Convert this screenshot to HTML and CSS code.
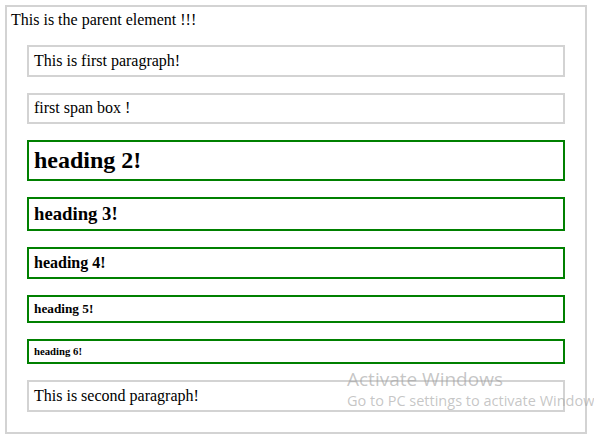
FILE: index.html
```html
<!DOCTYPE html>
<html lang="en">
  <head>
    <meta charset="UTF-8" />
    <meta name="viewport" content="width=device-width, initial-scale=1.0" />
    <title>Parent and children</title>
    <link rel="stylesheet" href="styles.css">
  </head>
  <body>
    <div class="parent">
      This is the parent element !!!
      <p class="box">This is first paragraph!</p>
      <span class="box">first span box !</span>
      <h2 class="box heading">heading 2!</h2>
      <h3 class="box heading">heading 3!</h3>
      <h4 class="box heading">heading 4!</h4>
      <h5 class="box heading">heading 5!</h5>
      <h6 class="box heading">heading 6!</h6>
      <p class="box">This is second paragraph!</p>
    </div>

    <div class="activate">
      <div class="activate-title">Activate Windows</div>
      <div class="activate-sub">Go to PC settings to activate Windows.</div>
    </div>
  </body>
</html>
```

FILE: styles.css
```css
body {
  font-family: "Liberation Serif", "Times New Roman", serif;
  font-size: 16px;
  line-height: 1.15;
  margin: 5px 7px 5px 5px;
  overflow: hidden;
}
.parent {
  border: 2px solid lightgray;
  padding: 4px 4px 4px 4px;
}
.box {
  display: block;
  margin: 16px;
  padding: 4.5px 5px;
  border: 2px solid lightgray;
}
.heading {
  border-color: green;
}
.activate {
  position: absolute;
  left: 347px;
  top: 367px;
  font-family: "Open Sans", "Noto Sans", sans-serif;
  color: rgba(160, 160, 160, 0.6);
  white-space: nowrap;
}
.activate-title {
  font-size: 19px;
  line-height: 24px;
}
.activate-sub {
  font-size: 14.5px;
  line-height: 20px;
}
```
